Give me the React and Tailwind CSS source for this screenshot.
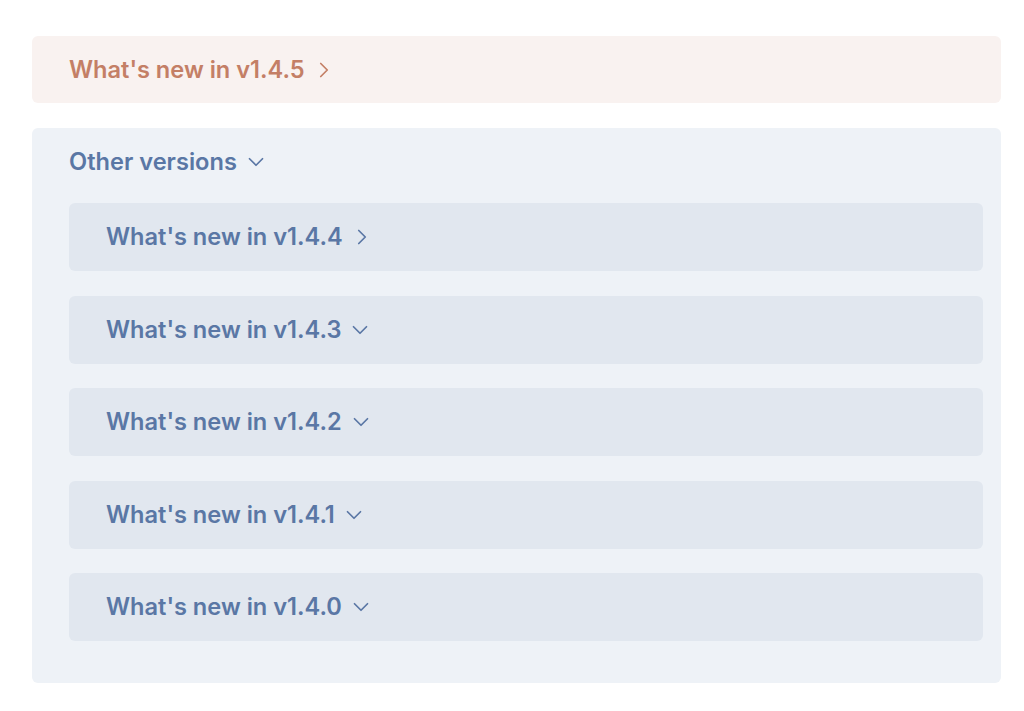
import { ChevronRight, ChevronDown } from "lucide-react";

const versions = [
  { v: "1.4.4", open: false },
  { v: "1.4.3", open: true },
  { v: "1.4.2", open: true },
  { v: "1.4.1", open: true },
  { v: "1.4.0", open: true },
];

export default function App() {
  return (
    <div
      className="min-h-screen bg-white pl-8 pt-9"
      style={{ fontFamily: "Inter, 'Noto Sans', sans-serif" }}
    >
      <div className="w-[969px]">
        <button className="flex h-[67px] w-full items-center gap-1.5 rounded-md bg-[#f9f2f0] pl-[37px] text-[23.6px] font-semibold text-[#c47f66]">
          What's new in v1.4.5
          <ChevronRight className="h-[26px] w-[26px]" strokeWidth={1.6} />
        </button>

        <div className="mt-[25px] rounded-md bg-[#eef2f7] pb-[42px] pl-[37px] pr-[18px] pt-[18px]">
          <div className="flex h-[32px] items-center gap-1.5 text-[23.6px] font-semibold text-[#5a77a5]">
            Other versions
            <ChevronDown className="h-[26px] w-[26px]" strokeWidth={1.6} />
          </div>
          <div className="mt-[25px] flex flex-col gap-[24.5px]">
            {versions.map((item) => (
              <button
                key={item.v}
                className="flex h-[68px] w-full items-center gap-1.5 rounded-md bg-[#e1e7ef] pl-[37px] text-[23.6px] font-semibold text-[#5a77a5]"
              >
                What's new in v{item.v}
                {item.open ? (
                  <ChevronDown className="h-[26px] w-[26px]" strokeWidth={1.6} />
                ) : (
                  <ChevronRight className="h-[26px] w-[26px]" strokeWidth={1.6} />
                )}
              </button>
            ))}
          </div>
        </div>
      </div>
    </div>
  );
}
